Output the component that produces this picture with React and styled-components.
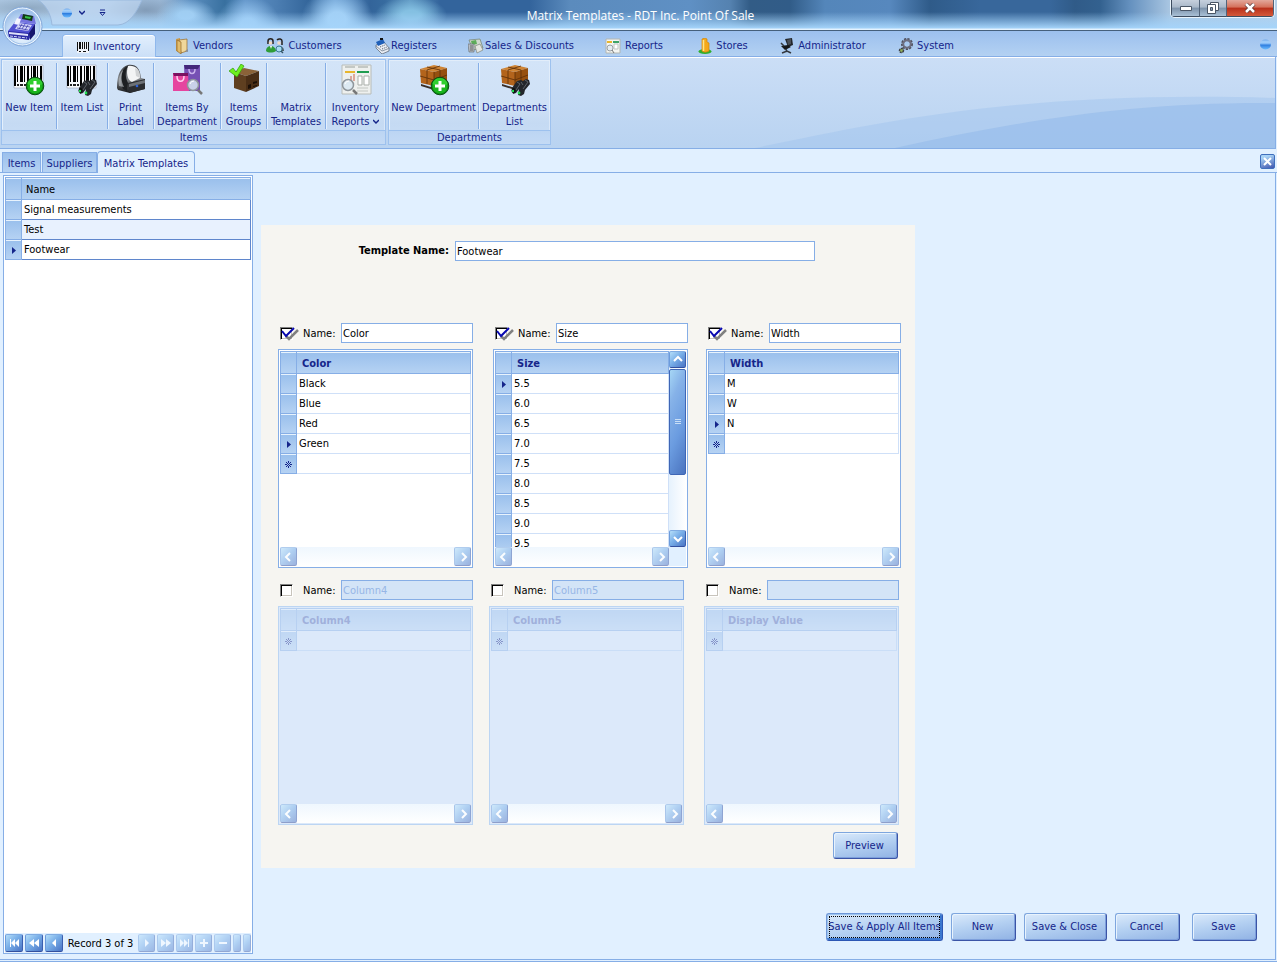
import React from "react";
import styled, { createGlobalStyle, css } from "styled-components";

const c = {
  line: "#86aee6",
  bg: "#e1f0ff",
  navy: "#15258a",
  panel: "#f6f5f1",
};

const Global = createGlobalStyle`
  * { box-sizing: border-box; }
  body {
    margin: 0;
    background: ${c.bg};
    color: #000;
    font: 11px/14px "DejaVu Sans Condensed", Tahoma, "DejaVu Sans", sans-serif;
  }
  button, input { font: inherit; color: inherit; margin: 0; }
  button { padding: 0; border: 0; background: none; white-space: nowrap; }
  svg { display: block; flex: none; }
`;

/* ---------- window frame ---------- */
const Shell = styled.div`
  min-height: 100vh;
  display: flex;
  flex-direction: column;
  border-bottom: 1px solid ${c.line};
`;

const TitleBar = styled.header`
  position: relative;
  height: 31px;
  display: flex;
  justify-content: center;
  align-items: center;
  border-bottom: 1px solid #45607c;
  background:
    linear-gradient(180deg, transparent 28px, #e4f3ff 29px),
    linear-gradient(180deg, rgba(170, 215, 250, 0) 40%, rgba(165, 212, 250, 0.95) 92%),
    radial-gradient(ellipse 36px 18px at 411px 15px, #84c0e2 25%, transparent),
    radial-gradient(ellipse 36px 32px at 337px 20px, #a2d0f6 25%, transparent),
    radial-gradient(ellipse 32px 28px at 248px 24px, #9ccbf4 20%, transparent),
    radial-gradient(ellipse 30px 16px at 186px 15px, #9fcdf2 25%, transparent),
    radial-gradient(ellipse 40px 16px at 146px 10px, #829cb8, transparent),
    radial-gradient(ellipse 60px 12px at 30px 8px, #8fa9c2, transparent),
    linear-gradient(90deg, #b0cbe6 0, #a3c0de 160px, #5d8fc0 190px, #38709f 225px, #5c8fc4 245px, #4d7fb3 275px, #33659a 310px,
      #5d92c8 335px, #33649a 370px, #376b9f 385px, #5d95c0 410px, #33649c 440px, #33649c 530px, #5b8bbd 570px,
      #5f90c4 690px, #5582b0 730px, #325c86 750px, #315c88 790px, #5486ba 825px, #5788be 890px, #2f5b89 930px,
      #38679b 980px, #38679b 1050px, #305b88 1075px, #33618f 1100px, #6591bf 1130px, #a9c6e2 1170px, #b5cfe8 100%);
`;

const WindowTitle = styled.h1`
  margin: 0;
  font: 400 12px/16px "Open Sans", "Noto Sans", sans-serif;
  color: #fff;
  padding: 2px 0 0 4px;
`;

const QuickAccess = styled.div`
  position: absolute;
  left: 0;
  top: 0;
  width: 144px;
  height: 26px;
`;

const QuickButtons = styled.div`
  position: absolute;
  left: 62px;
  top: 8px;
  display: flex;
  align-items: center;
  gap: 7px;
`;

const AppOrb = styled.button`
  position: absolute;
  left: 2px;
  top: 6px;
  z-index: 3;
`;

const Caption = styled.div`
  position: absolute;
  right: 2px;
  top: 0;
  display: flex;
  height: 18px;
  border: 1px solid #e9f4fc;
  border-top: 0;
  border-radius: 0 0 5px 5px;
  overflow: hidden;
`;

const CaptionButton = styled.button`
  width: ${(p) => p.$w}px;
  display: flex;
  justify-content: center;
  align-items: center;
  border-right: 1px solid #52647a;
  border-bottom: 1px solid #3d4c5f;
  background: ${(p) =>
    p.$close
      ? "linear-gradient(180deg,#e2a89b 0,#d4705a 45%,#b8301b 50%,#d4593a 100%)"
      : "linear-gradient(180deg,#c6d0dd 0,#a9b8c9 45%,#7d92aa 50%,#a9c0d6 100%)"};
  &:first-child { border-left: 1px solid #3d4c5f; }
`;

const TabStrip = styled.nav`
  display: flex;
  align-items: flex-end;
  height: 26px;
  padding: 0 6px 0 62px;
  background: linear-gradient(180deg, #9cc0ee, #b3d1f2);
  border-bottom: 1px solid ${c.line};
`;

const RibbonTab = styled.button`
  width: ${(p) => p.$w}px;
  height: 22px;
  padding-top: 2px;
  display: flex;
  align-items: center;
  justify-content: center;
  gap: ${(p) => (p.$tight ? 1 : 4)}px;
  color: ${c.navy};
  ${(p) =>
    p.$active &&
    css`
      height: 23px;
      margin-bottom: -1px;
      border: 1px solid #8fb8ec;
      border-bottom: 0;
      border-radius: 4px 4px 0 0;
      background: linear-gradient(180deg, #e2effd, #cbdff7);
      box-shadow: inset 0 1px #fff;
    `}
`;

const HelpDot = styled.button`
  margin: 0 0 6px auto;
`;

const Ribbon = styled.section`
  position: relative;
  display: flex;
  gap: 2px;
  height: 92px;
  margin-right: 1px;
  padding: 2px 1px 3px;
  border: solid ${c.line};
  border-width: 0 1px 1px 0;
  box-shadow: inset 0 1px #fff;
  background: linear-gradient(180deg, #cbdef6, #b9d3f1);
`;

const RibbonWave = styled.svg`
  position: absolute;
  right: 0;
  bottom: 0;
`;

const Group = styled.div`
  position: relative;
  display: flex;
  flex-direction: column;
  border: 1px solid #9dc1ee;
  box-shadow: inset 0 0 0 1px rgba(255, 255, 255, 0.35);
  background: linear-gradient(180deg, #d3e4f8 0, #cfe1f6 55%, #c5daf3 75%, #c9def6 100%);
`;

const GroupItems = styled.div`
  flex: 1;
  display: flex;
  padding: 3px 0 1px;
`;

const GroupLabel = styled.div`
  height: 14px;
  line-height: 13px;
  text-align: center;
  color: ${c.navy};
  border-top: 1px solid #9dc1ee;
  background: linear-gradient(180deg, #bcd5f3, #c4daf5);
`;

const BigButton = styled.button`
  width: ${(p) => p.$w}px;
  display: flex;
  flex-direction: column;
  align-items: center;
  color: ${c.navy};
  border-right: 1px solid #86aee6;
  box-shadow: inset 1px 0 #e4f0fd;
  white-space: pre-line;
  &:last-child { border-right: 0; }
`;

const IconSlot = styled.span`
  height: 38px;
  display: flex;
  align-items: flex-start;
  padding-top: 1px;
`;

const DocTabs = styled.nav`
  display: flex;
  align-items: flex-end;
  height: 24px;
  padding: 0 2px;
  border-bottom: 1px solid ${c.line};
`;

const DocTab = styled.button`
  width: ${(p) => p.$w}px;
  height: 20px;
  padding-top: 2px;
  margin-right: 1px;
  color: ${c.navy};
  border: 1px solid ${c.line};
  border-bottom: 0;
  background: linear-gradient(180deg, #9bc0ec, #b5d2f3);
  ${(p) =>
    p.$active &&
    css`
      height: 22px;
      margin: 0 0 -1px -1px;
      border-radius: 4px 4px 0 0;
      background: ${c.bg};
    `}
`;

const CloseDoc = styled.button`
  width: 15px;
  height: 15px;
  margin: 0 0 3px auto;
  display: grid;
  place-items: center;
  border: 1px solid #3f6fbd;
  border-radius: 2px;
  background: linear-gradient(160deg, #a8d2f5 20%, #3f55ae);
`;

/* ---------- workspace ---------- */
const Workspace = styled.div`
  flex: 1;
  display: flex;
  margin: 0 1px 1px 0;
  border: solid ${c.line};
  border-width: 0 1px 1px 0;
  padding: 2px 0 5px 3px;
`;

const Sidebar = styled.aside`
  flex: none;
  width: 250px;
  display: flex;
  flex-direction: column;
  border: 1px solid ${c.line};
  background: #fff;
  padding: 1px 1px 0;
`;

const Pager = styled.div`
  margin-top: auto;
  display: flex;
  align-items: center;
  gap: 2px;
  height: 20px;
  background: ${c.bg};
`;

const PagerText = styled.span`
  width: 74px;
  padding-top: 2px;
  text-align: center;
  white-space: nowrap;
`;

const Main = styled.main`
  flex: 1;
  display: flex;
  flex-direction: column;
  padding: 50px 18px 13px 8px;
`;

const Editor = styled.form`
  width: 654px;
  padding: 16px 14px 9px 17px;
  background: ${c.panel};
`;

const TemplateRow = styled.div`
  display: flex;
  align-items: center;
  justify-content: flex-end;
  gap: 6px;
  padding-right: 86px;
  margin-bottom: 62px;
  font-weight: bold;
`;

const TextBox = styled.input`
  width: ${(p) => p.$w || 132}px;
  height: 20px;
  padding: 0 1px;
  border: 1px solid ${c.line};
  border-radius: 0;
  background: #fff;
  font-weight: normal;
  &:disabled { background: #d3e4f7; color: #96b6e6; }
`;

const AttributeRow = styled.div`
  display: grid;
  grid-template-columns: ${(p) => p.$tracks};
  margin-bottom: ${(p) => p.$after}px;
`;

const Attribute = styled.fieldset`
  width: 195px;
  min-width: 0;
  margin: 0;
  padding: 0;
  border: 0;
`;

const AttributeHead = styled.div`
  display: flex;
  align-items: center;
  padding-left: 2px;
  margin-bottom: 6px;
`;

const NameLabel = styled.label`
  width: 38px;
  padding-top: 2px;
  margin-left: auto;
`;

const CheckWrap = styled.span`
  position: relative;
  display: block;
  height: 13px;
`;

const CheckInput = styled.input`
  appearance: none;
  display: block;
  width: 13px;
  height: 13px;
  background: #fff;
  border: 1px solid;
  border-color: #808080 #fff #fff #808080;
  box-shadow: inset 1px 1px #000, inset -1px -1px #c8c4bc;
`;

const Tick = styled.svg`
  position: absolute;
  left: 0;
  top: 0;
  pointer-events: none;
`;

/* ---------- data grids ---------- */
const GridBox = styled.div`
  position: relative;
  height: 219px;
  padding: 1px;
  display: grid;
  grid-template: minmax(0, 1fr) 19px / minmax(0, 1fr) auto;
  border: 1px solid ${(p) => (p.$off ? "#bcd5f3" : c.line)};
  background: ${(p) => (p.$off ? "#dce9fa" : "#fff")};
`;

const GridBody = styled.div`
  overflow: hidden;
`;

const headFill = css`
  background: linear-gradient(180deg, #99bfec, #b5d2f3);
  box-shadow: inset 0 1px #e8f3fd;
`;

const Corner = styled.th`
  width: 17px;
  height: 23px;
  padding: 0;
  border: 1px solid ${c.line};
  ${headFill}
`;

const HeadCell = styled.th`
  height: 23px;
  padding: 2px ${(p) => (p.$strong ? 5 : 4)}px 0;
  text-align: left;
  color: ${(p) => (p.$strong ? c.navy : "#000")};
  font-weight: ${(p) => (p.$strong ? "bold" : "normal")};
  border: solid ${c.line};
  border-width: 1px 1px 1px 0;
  ${headFill}
`;

const Marker = styled.td`
  height: 20px;
  padding: 0;
  border: solid ${c.line};
  border-width: 0 1px 1px;
  ${headFill}
  svg { margin: 0 auto; }
`;

const Cell = styled.td`
  padding: 0 2px;
  border: solid ${(p) => (p.$dark ? "#5f86cc" : "#cfe0f8")};
  border-width: 0 1px 1px 0;
  background: ${(p) => (p.$tint ? "#e8f1fe" : "transparent")};
`;

const Table = styled.table`
  width: 100%;
  table-layout: fixed;
  border-collapse: separate;
  border-spacing: 0;
  ${(p) =>
    p.$off &&
    css`
      opacity: 0.42;
      ${HeadCell} { color: #4f64b2; }
      ${Cell} { border-color: #b3cff5; }
    `}
`;

const HScroll = styled.div`
  display: flex;
  justify-content: space-between;
  background: linear-gradient(180deg, #eff7fe, #fff);
`;

const VScroll = styled.div`
  width: 17px;
  display: flex;
  flex-direction: column;
  background: linear-gradient(90deg, #e6f2fd, #fff);
`;

const Thumb = styled.div`
  height: 106px;
  margin: 1px 0 auto;
  display: grid;
  place-items: center;
  border: 1px solid #3f66b5;
  border-radius: 2px;
  background: linear-gradient(115deg, #a6d6f5 0, #86b2e8 25%, #6b9ce0 60%, #4a73bf 100%);
`;

const ScrollCorner = styled.div`
  background: ${c.bg};
`;

const GlyphButton = styled.button`
  flex: none;
  width: ${(p) => p.$w || 17}px;
  height: ${(p) => p.$h || 18}px;
  display: grid;
  place-items: center;
  border: 1px solid;
  border-color: #7fabe2 #3a5fb0 #33509f #6c9bdb;
  border-radius: 2px;
  background: linear-gradient(135deg, #b4def9 0, #78aee8 45%, #4a74c4 100%);
  &:disabled { opacity: ${(p) => (p.$faint ? 0.45 : 0.55)}; }
`;

const PushButton = styled.button`
  width: ${(p) => p.$w || 65}px;
  height: ${(p) => p.$h || 28}px;
  padding-right: 2px;
  color: ${c.navy};
  border: 1px solid;
  border-color: #7ea6de #3b54a6 #3b54a6 #7ea6de;
  border-radius: 3px;
  background: linear-gradient(170deg, #dbeafb 0, #b5d1f2 45%, #90b2e4 100%);
  box-shadow: inset -1px -1px #7d9fdb, inset 1px 1px #e8f3fd;
  ${(p) =>
    p.$focused &&
    css`
      padding-right: 0;
      border-color: #6e97d8 #2c56b4 #2c56b4 #6e97d8;
      box-shadow: inset -2px -2px #3c78cf, inset 1px 1px #9cc3ee;
      outline: 1px dotted #000;
      outline-offset: -4px;
    `}
`;

const PreviewRow = styled.div`
  display: flex;
  justify-content: flex-end;
  padding-right: 3px;
`;

const Footer = styled.footer`
  margin-top: auto;
  display: flex;
  justify-content: flex-end;
  gap: 12px;
`;

const FooterGroup = styled.div`
  display: flex;
  gap: 8px;
`;

/* ---------- drawings ---------- */
const glyphPaths = {
  left: "M7 2 3 6l4 4",
  right: "M5 2l4 4-4 4",
  up: "M2 7l4-4 4 4",
  down: "M2 4l4 4 4-4",
};
const Chevron = ({ dir, color = "#fff" }) => (
  <svg width="12" height="12" fill="none" stroke={color} strokeWidth="2">
    <path d={glyphPaths[dir]} />
  </svg>
);

const navPaths = {
  first: "M2 2h1v8H2zM7 2v8L3 6zM11 2v8L7 6z",
  fastBack: "M6 2v8L1 6zM11 2v8L6 6z",
  back: "M8 2v8L4 6z",
  next: "M4 2v8l4-4z",
  fastNext: "M1 2v8l5-4zM6 2v8l5-4z",
  last: "M1 2v8l4-4zM5 2v8l4-4zM9 2h1v8H9z",
  add: "M5 2h2v3h3v2H7v3H5V7H2V5h3z",
  remove: "M2 5h8v2H2z",
};
const NavGlyph = ({ kind }) => (
  <svg width="12" height="12" fill="#fff">
    <path d={navPaths[kind]} />
  </svg>
);

const RowArrow = () => (
  <svg width="15" height="16">
    <path d="M6 5v7l4-3.5z" fill={c.navy} />
  </svg>
);
const RowStar = () => (
  <svg width="15" height="16" fill={c.navy} shapeRendering="crispEdges">
    {["0001000", "0101010", "0010100", "1101011", "0010100", "0101010", "0001000"].map((row, y) =>
      [...row].map((bit, x) => bit === "1" && <rect key={`${x}-${y}`} x={x + 4} y={y + 5} width="1" height="1" />)
    )}
  </svg>
);

const Dot = ({ size = 10 }) => (
  <svg width={size} height={size} viewBox="0 0 10 10">
    <defs>
      <linearGradient id={"dot" + size} x2="0" y2="1">
        <stop offset="0" stopColor="#6fa9ec" />
        <stop offset=".25" stopColor="#a9d3fb" />
        <stop offset=".45" stopColor="#7ab4f4" />
        <stop offset=".55" stopColor="#2f7edf" />
        <stop offset="1" stopColor="#6bbcff" />
      </linearGradient>
    </defs>
    <ellipse cx="5" cy="5" rx="5" ry="4.500" fill={`url(#dot${size})`} />
  </svg>
);

const Register = ({ size }) => (
  <svg width={size} height={size} viewBox="0 0 32 32">
    <path d="M2 20 9 11l20 2-3 12-3 3-20-2z" fill="#5151d2" />
    <path d="M2 20l21 2v7L3 26z" fill="#2b2ba4" />
    <path d="M3 21l19 2v2L3 23z" fill="#dfe2fb" />
    <path d="M4 25l17 2" stroke="#cfd3f5" strokeDasharray="3 1" />
    <path d="M23 22l6-9v10l-5 6z" fill="#16166e" />
    <path d="M10 11l5-8 13 2 2 8z" fill="#7474de" />
    <path d="M17 3l10 2-1 5-10-2z" fill="#123a18" />
    <path d="M19 5l6 1-1 2-5-1z" fill="#35c244" />
    <path d="M11 7l4 1-2 6-5-1z" fill="#f4f4ff" />
    <path d="M13 12l13 2-4 6-13-2z" fill="#d3d6f8" />
    <path d="M13 14l11 2M11 17l11 2M16 13l-3 5M19 13l-3 5M22 14l-3 5" stroke="#3434a8" strokeWidth=".7" />
  </svg>
);

const Orb = () => (
  <svg width="41" height="41" viewBox="0 0 41 41">
    <defs>
      <radialGradient id="orb" cx=".5" cy=".75" r=".7">
        <stop offset="0" stopColor="#eff8ff" />
        <stop offset=".6" stopColor="#c4dcf6" />
        <stop offset="1" stopColor="#9dbfe8" />
      </radialGradient>
    </defs>
    <circle cx="20.500" cy="20.500" r="19.500" fill="#e9f4fe" stroke="#7fa5d8" />
    <circle cx="20.500" cy="20.500" r="17.500" fill="url(#orb)" stroke="#9fc0ea" />
    <svg x="4" y="5" width="32" height="32"><Register size={32} /></svg>
  </svg>
);

const bars = [[0, 2], [3, 1], [6, 3], [10, 1], [13, 2], [17, 1], [19, 3], [23, 1], [26, 2]];
const Barcode = ({ children }) => (
  <svg width="32" height="32" viewBox="0 0 32 32">
    <path d="M1 1h29v23H1z" fill="#f8f9fb" stroke="#9aa3b5" strokeWidth=".6" />
    {bars.map(([x, w], i) => (
      <path key={x} d={`M${x + 1} 2h${w}v${i % 4 === 0 ? 20 : 16}h-${w}z`} fill="#000" />
    ))}
    <path d="M4 20h2v2H4zM7 20h3v2H7zM11 20h2v2h-2z" fill="#222" />
    {children}
  </svg>
);
const Plus = () => (
  <g>
    <circle cx="22" cy="22" r="8.800" fill="#0a8a12" stroke="#0b4f10" />
    <path d="M14.500 20a7.800 7.800 0 0 1 15 0c-4 3-10 3-15 0z" fill="#4fe04c" />
    <circle cx="22" cy="22" r="7.500" fill="#22c822" opacity=".7" />
    <path d="M20.500 17h3v3.500H27v3h-3.500V27h-3v-3.500H17v-3h3.500z" fill="#fff" />
  </g>
);
const Binoculars = () => (
  <g>
    <path d="M13 24l5-7 4-1 2 1 3-2 3 1 1 4-5 6-1 4-3 2-3-1 1-6-3 4-3 1z" fill="#23262b" />
    <path d="M18 18l3 2-4 6M26 16l3 2-5 7M22 18l2 3" stroke="#5d6269" fill="none" />
    <ellipse cx="14.500" cy="26.500" rx="2" ry="2.500" fill="#0b0b0b" />
    <circle cx="14" cy="27" r="1.200" fill="#22e052" />
    <circle cx="20" cy="29" r="1.400" fill="#22e052" />
  </g>
);
const Lens = ({ x, y }) => (
  <g transform={`translate(${x} ${y})`}>
    <path d="M5 5l4 4" stroke="#777" strokeWidth="2.500" />
    <circle r="5.500" fill="#d8e8f2" fillOpacity=".85" stroke="#8f969c" strokeWidth="1.500" />
    <path d="M-3 -1a4 4 0 0 1 4-3" stroke="#fff" fill="none" />
  </g>
);
const Printer = () => (
  <svg width="32" height="32" viewBox="0 0 32 32">
    <defs>
      <linearGradient id="prn" x2="0" y2="1">
        <stop offset="0" stopColor="#3a3d41" />
        <stop offset=".5" stopColor="#84888d" />
        <stop offset="1" stopColor="#17181a" />
      </linearGradient>
    </defs>
    <path d="M2 24C2 10 6 3 13 1c8-1 12 3 13 13l4 1v10l-15 4-12-3z" fill="url(#prn)" />
    <path d="M13 2c6-1 12 2 12 12l-8 4C12 16 11 8 13 2z" fill="#f3f4f5" />
    <path d="M20 4l1 8 4 2-1-7z" fill="#d2d4d6" />
    <path d="M7 9c1-4 3-6 6-7-3 5-3 11 0 17l-1 8-4-2C6 20 5 14 7 9z" fill="#1d1f22" />
    <path d="M4 22C3 15 5 9 8 6c-2 6-2 11 1 17z" fill="#b4b8bc" opacity=".7" />
    <path d="M13 19l17-4v10l-16 4z" fill="#2b2d31" />
    <path d="M14 20l16-4v3l-16 4z" fill="#6d7176" />
    <circle cx="22" cy="22" r="1.300" fill="#2e63d8" />
  </svg>
);
const Bags = () => (
  <svg width="32" height="32" viewBox="0 0 32 32">
    <path d="M13 1h16v26H14z" fill="#7650b4" />
    <path d="M13 1h16l-2 4H14z" fill="#43277a" />
    <path d="M18 5c0 6 6 6 6 0" fill="none" stroke="#cbb3ec" strokeWidth="1.500" />
    <path d="M2 9h15l1 18H2z" fill="#e6459f" />
    <path d="M2 9h15v3H3z" fill="#7c1260" />
    <path d="M6 12c0 7 7 7 7 0" fill="none" stroke="#ffd2f1" strokeWidth="1.500" />
    <Lens x={22} y={21} />
  </svg>
);
const BoxCheck = () => (
  <svg width="32" height="32" viewBox="0 0 32 32">
    <path d="M6 8l10-4 15 3-13 5z" fill="#8a6238" />
    <path d="M6 8l12 4v16L6 24z" fill="#5f3f20" />
    <path d="M18 12l13-5v15l-13 6z" fill="#4a2e16" />
    <path d="M20 21l3-1v4l-3 1zM25 18l4-1v2l-4 1zM25 22l4-1v1l-4 1z" fill="#1b0f07" />
    <path d="M1 7l4-3 3 4 5-8 3 2-7 11z" fill="#6df01e" stroke="#2f9c0a" strokeWidth=".7" />
  </svg>
);
const Report = ({ size = 32 }) => (
  <svg width={size} height={size} viewBox="0 0 32 32">
    <path d="M2 1h29v29H2z" fill="#eef0ee" stroke="#b8bcb8" />
    <path d="M5 3h10M18 3h10" stroke="#9aa09a" />
    <path d="M5 7h10v2H5z" fill="#e8b62c" />
    <path d="M17 7h12v2H17z" fill="#1f9c50" />
    <path d="M18 12h4v9h-4zM24 12h5v9h-5z" fill="#fff" stroke="#a9aea9" />
    <path d="M17 24h11M17 27h11" stroke="#c2c6c2" />
    <path d="M8 17v-2M11 17v-5M14 17v-7" stroke="#d98f80" strokeWidth="1.500" />
    <Lens x={8} y={21} />
  </svg>
);
const Crates = ({ children }) => (
  <svg width="32" height="32" viewBox="0 0 32 32">
    <path d="M2 5l14-4 13 3-13 4z" fill="#cf8434" />
    <path d="M2 5l14 3v14L3 19z" fill="#b3641c" />
    <path d="M16 8l13-4v13l-13 5z" fill="#96500f" />
    <path d="M9 3l13 3v14M22 2L9 6v14M2 12l14 4 13-5M16 8v14" fill="none" stroke="#5a2d08" strokeWidth=".8" />
    <path d="M3 20l13 4 13-5v2l-13 5-13-4z" fill="#3a2f28" />
    {children}
  </svg>
);

const MiniBarcode = () => (
  <svg width="12" height="11">
    <path d="M0 0h12v11H0z" fill="#f1f4fa" />
    <path d="M0 0h1v9H0zM2 0h2v7H2zM5 0h1v7H5zM7 0h1v7H7zM9 0h1v7H9zM11 0h1v9h-1zM2 9h2v1H2zM6 9h3v1H6z" fill="#111" />
  </svg>
);
const Folder = () => (
  <svg width="14" height="16" viewBox="0 0 14 16">
    <path d="M1 1l4-1v14l-4-1z" fill="#c99b4d" />
    <path d="M4 2l8-1v12l-6 2z" fill="#f0d79a" stroke="#94692a" strokeWidth=".7" />
    <path d="M2 2l4 2v12l-4-3z" fill="#e2bc6c" stroke="#94692a" strokeWidth=".7" />
    <path d="M10 13l3-2v3z" fill="#8a8f98" />
  </svg>
);
const People = () => (
  <svg width="18" height="16" viewBox="0 0 18 16">
    <path d="M2 6V3c0-3 5-3 5 0v3" fill="none" stroke="#26211e" strokeWidth="1.500" />
    <path d="M11 2c2-2 5-1 5 1v4" fill="none" stroke="#26211e" strokeWidth="1.500" />
    <circle cx="4.500" cy="5" r="1.800" fill="#f0d9c4" />
    <circle cx="13" cy="5" r="1.800" fill="#f0d9c4" />
    <path d="M0 13c0-4 3-5 5-5s5 2 5 5c-3 2-8 2-10 0z" fill="#2f9d38" />
    <path d="M4 8l1 3 1-3z" fill="#fff" />
    <path d="M10 13c0-4 2-5 3-5 3 0 5 2 5 5z" fill="#4c5a62" />
    <circle cx="13" cy="11" r="3" fill="#a9dcf2" stroke="#3c7a96" />
    <path d="M15 13l2 2" stroke="#356" strokeWidth="1.500" />
  </svg>
);
const MiniRegister = () => (
  <svg width="15" height="16" viewBox="0 0 15 16">
    <path d="M1 7l8-3 5 6v3l-7 3-6-6z" fill="#e9edf4" stroke="#55606e" strokeWidth=".7" />
    <path d="M1 8l6 5 8-3" fill="none" stroke="#8b95a3" />
    <path d="M1 4l7-3 2 4-7 3z" fill="#1f5fb8" />
    <path d="M5 0h3v2H5z" fill="#111" />
    <path d="M5 9l5-2M7 11l5-2" stroke="#4d5764" strokeDasharray="1 1" />
  </svg>
);
const Money = () => (
  <svg width="16" height="16" viewBox="0 0 16 16">
    <path d="M1 2l11-1 3 9-10 2z" fill="#cfd9cb" stroke="#708070" strokeWidth=".7" />
    <path d="M3 3l5-1 1 4-5 1z" fill="#5cab58" />
    <path d="M0 6h6v8H1z" fill="#b7bcc2" stroke="#6c737a" strokeWidth=".7" />
    <path d="M7 8l5-2 3 6-6 3z" fill="#e4e6e0" stroke="#80857c" strokeWidth=".7" />
    <path d="M2 8h3M2 10h3M2 12h3" stroke="#666" />
  </svg>
);
const MiniReport = () => (
  <svg width="16" height="16" viewBox="0 0 16 16">
    <path d="M1 1h14v14H1z" fill="#f4f5f2" stroke="#b2b6b2" />
    <path d="M2 3h5v2H2z" fill="#e8b62c" />
    <path d="M8 3h6v2H8z" fill="#3fa568" />
    <path d="M9 6h4v5H9z" fill="#fff" stroke="#c2c6c2" />
    <circle cx="5" cy="10" r="3" fill="#e6edf2" stroke="#9aa1a7" />
    <path d="M7 12l2 3" stroke="#777" />
  </svg>
);
const Jar = () => (
  <svg width="14" height="16" viewBox="0 0 14 16">
    <ellipse cx="7" cy="13.500" rx="6.500" ry="2.500" fill="#2faf2e" />
    <path d="M4 1l3-1 2 1v3l2 1v8c-2 1.500-6 1.500-7 0z" fill="#f5a91b" stroke="#d08409" strokeWidth=".7" />
    <path d="M5.500 2v11" stroke="#ffe58a" strokeWidth="1.500" />
  </svg>
);
const Chair = () => (
  <svg width="14" height="16" viewBox="0 0 14 16">
    <path d="M5 1l7-1 1 7-5 2z" fill="#22262b" />
    <path d="M7 2l4-1v5l-3 1z" fill="#4a5058" />
    <path d="M1 8l7-1 3 2-6 3z" fill="#15181b" />
    <path d="M6 11l1 3M2 15l5-2 4 2M1 5l3 3" stroke="#33383e" strokeWidth="1.500" fill="none" />
  </svg>
);
const Gears = () => (
  <svg width="15" height="16" viewBox="0 0 15 16">
    <circle cx="9" cy="6" r="4.500" fill="none" stroke="#4d4e5c" strokeWidth="3" strokeDasharray="2 1" />
    <circle cx="9" cy="6" r="3.800" fill="none" stroke="#6d6e80" strokeWidth="2" />
    <circle cx="3.500" cy="12.500" r="2" fill="#93b35a" stroke="#3d4048" strokeWidth="1.500" strokeDasharray="2 .6" />
  </svg>
);

/* ---------- composite parts ---------- */
function DataGrid({ title, rows, current, scroll, off, starred }) {
  return (
    <GridBox $off={off}>
      <GridBody>
        <Table $off={off}>
          <thead>
            <tr>
              <Corner />
              <HeadCell $strong>{title}</HeadCell>
            </tr>
          </thead>
          <tbody>
            {rows.map((r, i) => (
              <tr key={r}>
                <Marker>{i === current && <RowArrow />}</Marker>
                <Cell>{r}</Cell>
              </tr>
            ))}
            {starred && (
              <tr>
                <Marker><RowStar /></Marker>
                <Cell />
              </tr>
            )}
          </tbody>
        </Table>
      </GridBody>
      {scroll ? (
        <VScroll>
          <GlyphButton type="button" $h={17} aria-label="Scroll up"><Chevron dir="up" /></GlyphButton>
          <Thumb>
            <svg width="6" height="6"><path d="M0 .5h6M0 2.500h6M0 4.500h6" stroke="#c8def6" /></svg>
          </Thumb>
          <GlyphButton type="button" $h={17} aria-label="Scroll down"><Chevron dir="down" /></GlyphButton>
        </VScroll>
      ) : (
        <span />
      )}
      <HScroll>
        <GlyphButton type="button" disabled $h={19} aria-label="Scroll left"><Chevron dir="left" /></GlyphButton>
        <GlyphButton type="button" disabled $h={19} aria-label="Scroll right"><Chevron dir="right" /></GlyphButton>
      </HScroll>
      <ScrollCorner />
    </GridBox>
  );
}

function AttributeBlock({ id, name, title, on, ...grid }) {
  return (
    <Attribute>
      <AttributeHead>
        <CheckWrap>
          <CheckInput type="checkbox" defaultChecked={on} aria-label={`Use ${title}`} />
          {on && (
            <Tick width="19" height="14" fill="none">
              <path d="M6 9l3 3 9-9" stroke="#808080" strokeWidth="2.500" />
              <path d="M2 4l4 5 8-8" stroke="#0808b0" strokeWidth="2" />
            </Tick>
          )}
        </CheckWrap>
        <NameLabel htmlFor={id}>Name:</NameLabel>
        <TextBox id={id} defaultValue={name} disabled={!on} />
      </AttributeHead>
      <DataGrid title={title} off={!on} {...grid} />
    </Attribute>
  );
}

const tabs = [
  ["Inventory", 94, MiniBarcode],
  ["Vendors", 96, Folder],
  ["Customers", 104, People],
  ["Registers", 100, MiniRegister, true],
  ["Sales & Discounts", 130, Money, true],
  ["Reports", 96, MiniReport],
  ["Stores", 82, Jar],
  ["Administrator", 118, Chair],
  ["System", 88, Gears],
];

const itemButtons = [
  ["New Item", 55, <Barcode><Plus /></Barcode>],
  ["Item List", 51, <Barcode><Binoculars /></Barcode>],
  ["Print\nLabel", 46, <Printer />],
  ["Items By\nDepartment", 67, <Bags />],
  ["Items\nGroups", 46, <BoxCheck />],
  ["Matrix\nTemplates", 59, null],
  ["Inventory\nReports", 59, <Report />, true],
];
const departmentButtons = [
  ["New Department", 90, <Crates><Plus /></Crates>],
  ["Departments\nList", 71, <Crates><Binoculars /></Crates>],
];

const MenuMark = styled.svg`
  && { display: inline-block; margin-left: 4px; }
`;

function ButtonGroup({ label, items }) {
  return (
    <Group>
      <GroupItems>
        {items.map(([text, w, icon, menu]) => (
          <BigButton key={text} $w={w}>
            <IconSlot>{icon}</IconSlot>
            <span>
              {text}
              {menu && (
                <MenuMark width="6" height="6" fill="none" stroke={c.navy} strokeWidth="1.500">
                  <path d="M0 1l3 3 3-3" />
                </MenuMark>
              )}
            </span>
          </BigButton>
        ))}
      </GroupItems>
      <GroupLabel>{label}</GroupLabel>
    </Group>
  );
}

const templates = ["Signal measurements", "Test", "Footwear"];
const sizes = ["5.5", "6.0", "6.5", "7.0", "7.5", "8.0", "8.5", "9.0", "9.5"];

export default function App() {
  return (
    <Shell>
      <Global />
      <TitleBar>
        <WindowTitle>Matrix Templates - RDT Inc. Point Of Sale</WindowTitle>
        <QuickAccess>
          <svg width="144" height="26">
            <path d="M38 0c8 5 13 14 14 25h66c12-1 18-12 24-25z" fill="#c3daf4" fillOpacity=".65" stroke="#9ab9dd" />
          </svg>
          <QuickButtons>
            <button aria-label="Quick action"><Dot /></button>
            <button aria-label="More actions">
              <svg width="6" height="6" fill="none" stroke={c.navy} strokeWidth="1.500"><path d="M0 1l3 3 3-3" /></svg>
            </button>
            <span />
            <button aria-label="Customize toolbar">
              <svg width="7" height="8" fill="none" stroke={c.navy}><path d="M1 1h5M1 3.500h5L3.500 6.500z" /></svg>
            </button>
          </QuickButtons>
        </QuickAccess>
        <AppOrb aria-label="Application menu"><Orb /></AppOrb>
        <Caption>
          <CaptionButton $w={29} aria-label="Minimize">
            <svg width="12" height="5"><path d="M.5.5h11v4H.5z" fill="#fff" stroke="#4a5666" /></svg>
          </CaptionButton>
          <CaptionButton $w={27} aria-label="Restore">
            <svg width="12" height="12" fill="#fff" stroke="#4a5666">
              <path d="M3.500.5h8v8h-8z" />
              <path d="M.5 2.500h8v9h-8z" />
              <path d="M3.500 5.500h2v3h-2z" fill="#8b9db2" />
            </svg>
          </CaptionButton>
          <CaptionButton $w={47} $close aria-label="Close">
            <svg width="12" height="10">
              <path d="M2 1l8 8M10 1L2 9" stroke="#5a3434" strokeWidth="4" />
              <path d="M2 1l8 8M10 1L2 9" stroke="#fff" strokeWidth="2.500" />
            </svg>
          </CaptionButton>
        </Caption>
      </TitleBar>

      <TabStrip>
        {tabs.map(([text, w, Icon, tight], i) => (
          <RibbonTab key={text} $w={w} $tight={tight} $active={i === 0}>
            <Icon />
            {text}
          </RibbonTab>
        ))}
        <HelpDot aria-label="Help"><Dot size={11} /></HelpDot>
      </TabStrip>

      <Ribbon>
        <RibbonWave width="520" height="52" viewBox="0 0 520 52">
          <path d="M0 52C120 28 260-6 520 2v50z" fill="#9fc4ee" fillOpacity=".45" />
          <path d="M140 52C260 26 370 6 520 7v45z" fill="#8fb8ea" fillOpacity=".5" />
        </RibbonWave>
        <ButtonGroup label="Items" items={itemButtons} />
        <ButtonGroup label="Departments" items={departmentButtons} />
      </Ribbon>

      <DocTabs>
        <DocTab $w={39}>Items</DocTab>
        <DocTab $w={55}>Suppliers</DocTab>
        <DocTab $w={98} $active>Matrix Templates</DocTab>
        <CloseDoc aria-label="Close tab">
          <svg width="9" height="9" stroke="#fff" strokeWidth="2"><path d="M1 1l7 7M8 1L1 8" /></svg>
        </CloseDoc>
      </DocTabs>

      <Workspace>
        <Sidebar>
          <Table>
            <thead>
              <tr><Corner /><HeadCell>Name</HeadCell></tr>
            </thead>
            <tbody>
              {templates.map((t, i) => (
                <tr key={t}>
                  <Marker>{i === 2 && <RowArrow />}</Marker>
                  <Cell $dark $tint={i === 1}>{t}</Cell>
                </tr>
              ))}
            </tbody>
          </Table>
          <Pager>
            <GlyphButton $w={18} aria-label="First"><NavGlyph kind="first" /></GlyphButton>
            <GlyphButton $w={18} aria-label="Previous page"><NavGlyph kind="fastBack" /></GlyphButton>
            <GlyphButton $w={18} aria-label="Previous"><NavGlyph kind="back" /></GlyphButton>
            <PagerText>Record 3 of 3</PagerText>
            {["next", "fastNext", "last", "add", "remove"].map((k) => (
              <GlyphButton key={k} $faint disabled aria-label={k}><NavGlyph kind={k} /></GlyphButton>
            ))}
            <GlyphButton $w={8} $faint disabled aria-label="Accept" />
            <GlyphButton $w={8} $faint disabled aria-label="Discard" />
          </Pager>
        </Sidebar>

        <Main>
          <Editor onSubmit={(e) => e.preventDefault()}>
            <TemplateRow>
              <label htmlFor="template">Template Name:</label>
              <TextBox id="template" $w={360} defaultValue="Footwear" />
            </TemplateRow>
            <AttributeRow $tracks="215px 213px 195px" $after={12}>
              <AttributeBlock id="a1" on name="Color" title="Color" rows={["Black", "Blue", "Red", "Green"]} current={3} starred />
              <AttributeBlock id="a2" on name="Size" title="Size" rows={sizes} current={0} scroll />
              <AttributeBlock id="a3" on name="Width" title="Width" rows={["M", "W", "N"]} current={2} starred />
            </AttributeRow>
            <AttributeRow $tracks="211px 215px 195px" $after={7}>
              <AttributeBlock id="a4" name="Column4" title="Column4" rows={[]} starred />
              <AttributeBlock id="a5" name="Column5" title="Column5" rows={[]} starred />
              <AttributeBlock id="a6" name="" title="Display Value" rows={[]} starred />
            </AttributeRow>
            <PreviewRow>
              <PushButton type="button" $h={27}>Preview</PushButton>
            </PreviewRow>
          </Editor>

          <Footer>
            <FooterGroup>
              <PushButton $w={117} $focused>Save &amp; Apply All Items</PushButton>
              <PushButton>New</PushButton>
              <PushButton $w={83}>Save &amp; Close</PushButton>
              <PushButton>Cancel</PushButton>
            </FooterGroup>
            <PushButton>Save</PushButton>
          </Footer>
        </Main>
      </Workspace>
    </Shell>
  );
}
